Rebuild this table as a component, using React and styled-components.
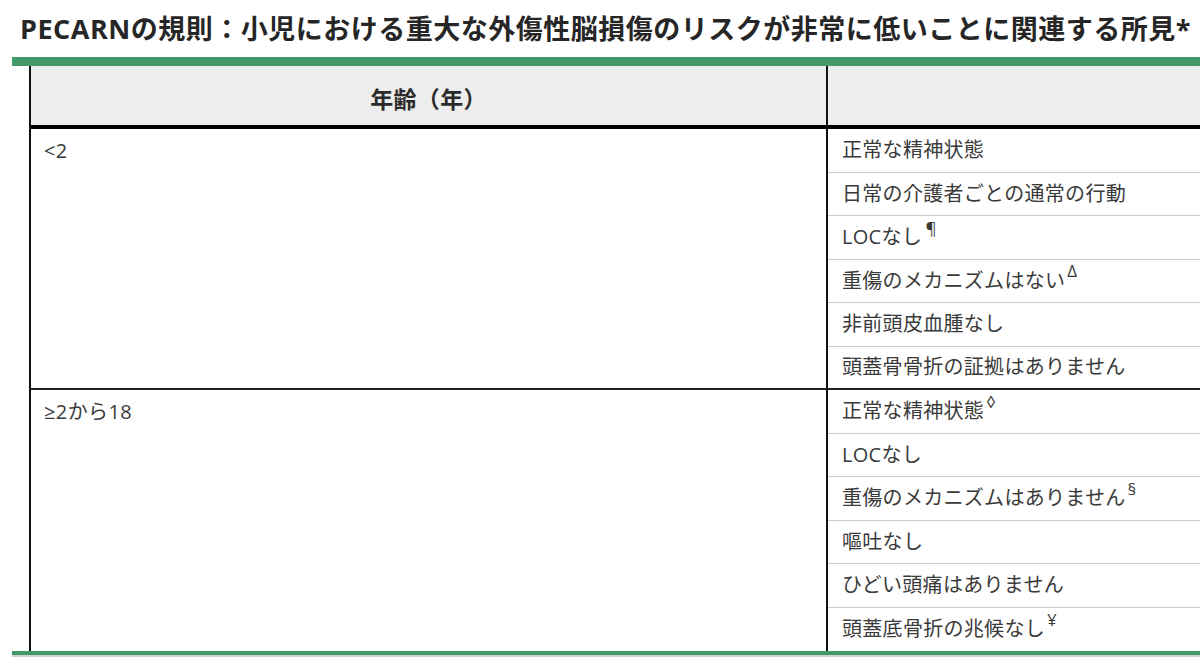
import React from 'react';
import styled, { createGlobalStyle } from 'styled-components';

const GlobalStyle = createGlobalStyle`
  * { box-sizing: border-box; }
  html, body {
    margin: 0;
    padding: 0;
    overflow: hidden;
    background: #ffffff;
  }
  body {
    font-family: "Open Sans", "Noto Sans CJK JP", sans-serif;
    color: #333333;
  }
`;

const Page = styled.div`
  width: 1200px;
  height: 669px;
  overflow: hidden;
`;

const Title = styled.h1`
  margin: 0;
  padding: 10px 0 0 20px;
  height: 57px;
  font-size: 27px;
  line-height: 38px;
  font-weight: 700;
  letter-spacing: 0.5px;
  color: #262626;
  white-space: nowrap;
`;

const TableFrame = styled.div`
  margin-left: 12px;
  width: 1500px;
  border-top: 9px solid #429a6b;
  border-bottom: 4px solid #429a6b;
  box-shadow: 0 2px 0 #cfcfcf;
  padding-left: 17px;
`;

const Table = styled.table`
  border-collapse: separate;
  border-spacing: 0;
  table-layout: fixed;
  width: 100%;
  border-left: 2px solid #111111;
`;

const HeadCell = styled.th`
  height: 63px;
  padding: 4px 0 0;
  background: #ededed;
  border-bottom: 4px solid #000000;
  border-right: ${(p) => (p.$divider ? '2px solid #111111' : 'none')};
  font-size: 23px;
  font-weight: 700;
  letter-spacing: 0.3px;
  color: #2b2b2b;
  text-align: center;
  width: ${(p) => (p.$width ? `${p.$width}px` : 'auto')};
`;

const AgeCell = styled.td`
  vertical-align: top;
  padding: 8px 0 0 13px;
  border-right: 2px solid #111111;
  border-bottom: ${(p) => (p.$last ? 'none' : '2px solid #222222')};
  font-size: 20px;
  line-height: 28px;
  letter-spacing: 0.4px;
  color: #3a3a3a;
`;

const FindingCell = styled.td`
  height: 43.5px;
  padding: 0 0 0 14px;
  border-bottom: ${(p) =>
    p.$groupEnd ? (p.$last ? 'none' : '2px solid #222222') : '1px solid #cccccc'};
  font-size: 20px;
  line-height: 28px;
  letter-spacing: 0.3px;
  color: #3a3a3a;
  vertical-align: middle;
  white-space: nowrap;
`;

const Mark = styled.sup`
  font-size: 17px;
  line-height: 0;
  margin-left: ${(p) => (p.$tight ? '-2px' : '2px')};
  position: relative;
  top: -3px;
`;

const groups = [
  {
    age: '<2',
    findings: [
      { text: '正常な精神状態' },
      { text: '日常の介護者ごとの通常の行動' },
      { text: 'LOCなし ', mark: '¶', tight: true },
      { text: '重傷のメカニズムはない', mark: 'Δ' },
      { text: '非前頭皮血腫なし' },
      { text: '頭蓋骨骨折の証拠はありません' },
    ],
  },
  {
    age: '≥2から18',
    findings: [
      { text: '正常な精神状態', mark: '◊' },
      { text: 'LOCなし' },
      { text: '重傷のメカニズムはありません', mark: '§' },
      { text: '嘔吐なし' },
      { text: 'ひどい頭痛はありません' },
      { text: '頭蓋底骨折の兆候なし', mark: '¥' },
    ],
  },
];

const App = () => {
  return (
    <Page>
      <GlobalStyle />
      <Title>PECARNの規則：小児における重大な外傷性脳損傷のリスクが非常に低いことに関連する所見*</Title>
      <TableFrame>
        <Table>
          <thead>
            <tr>
              <HeadCell $divider $width={797}>年齢（年）</HeadCell>
              <HeadCell />
            </tr>
          </thead>
          <tbody>
            {groups.map((group, gi) => {
              const lastGroup = gi === groups.length - 1;
              return group.findings.map((f, fi) => (
                <tr key={`${gi}-${fi}`}>
                  {fi === 0 && (
                    <AgeCell rowSpan={group.findings.length} $last={lastGroup}>
                      {group.age}
                    </AgeCell>
                  )}
                  <FindingCell
                    $groupEnd={fi === group.findings.length - 1}
                    $last={lastGroup}
                  >
                    {f.text}
                    {f.mark && <Mark $tight={f.tight}>{f.mark}</Mark>}
                  </FindingCell>
                </tr>
              ));
            })}
          </tbody>
        </Table>
      </TableFrame>
    </Page>
  );
};

export default App;
